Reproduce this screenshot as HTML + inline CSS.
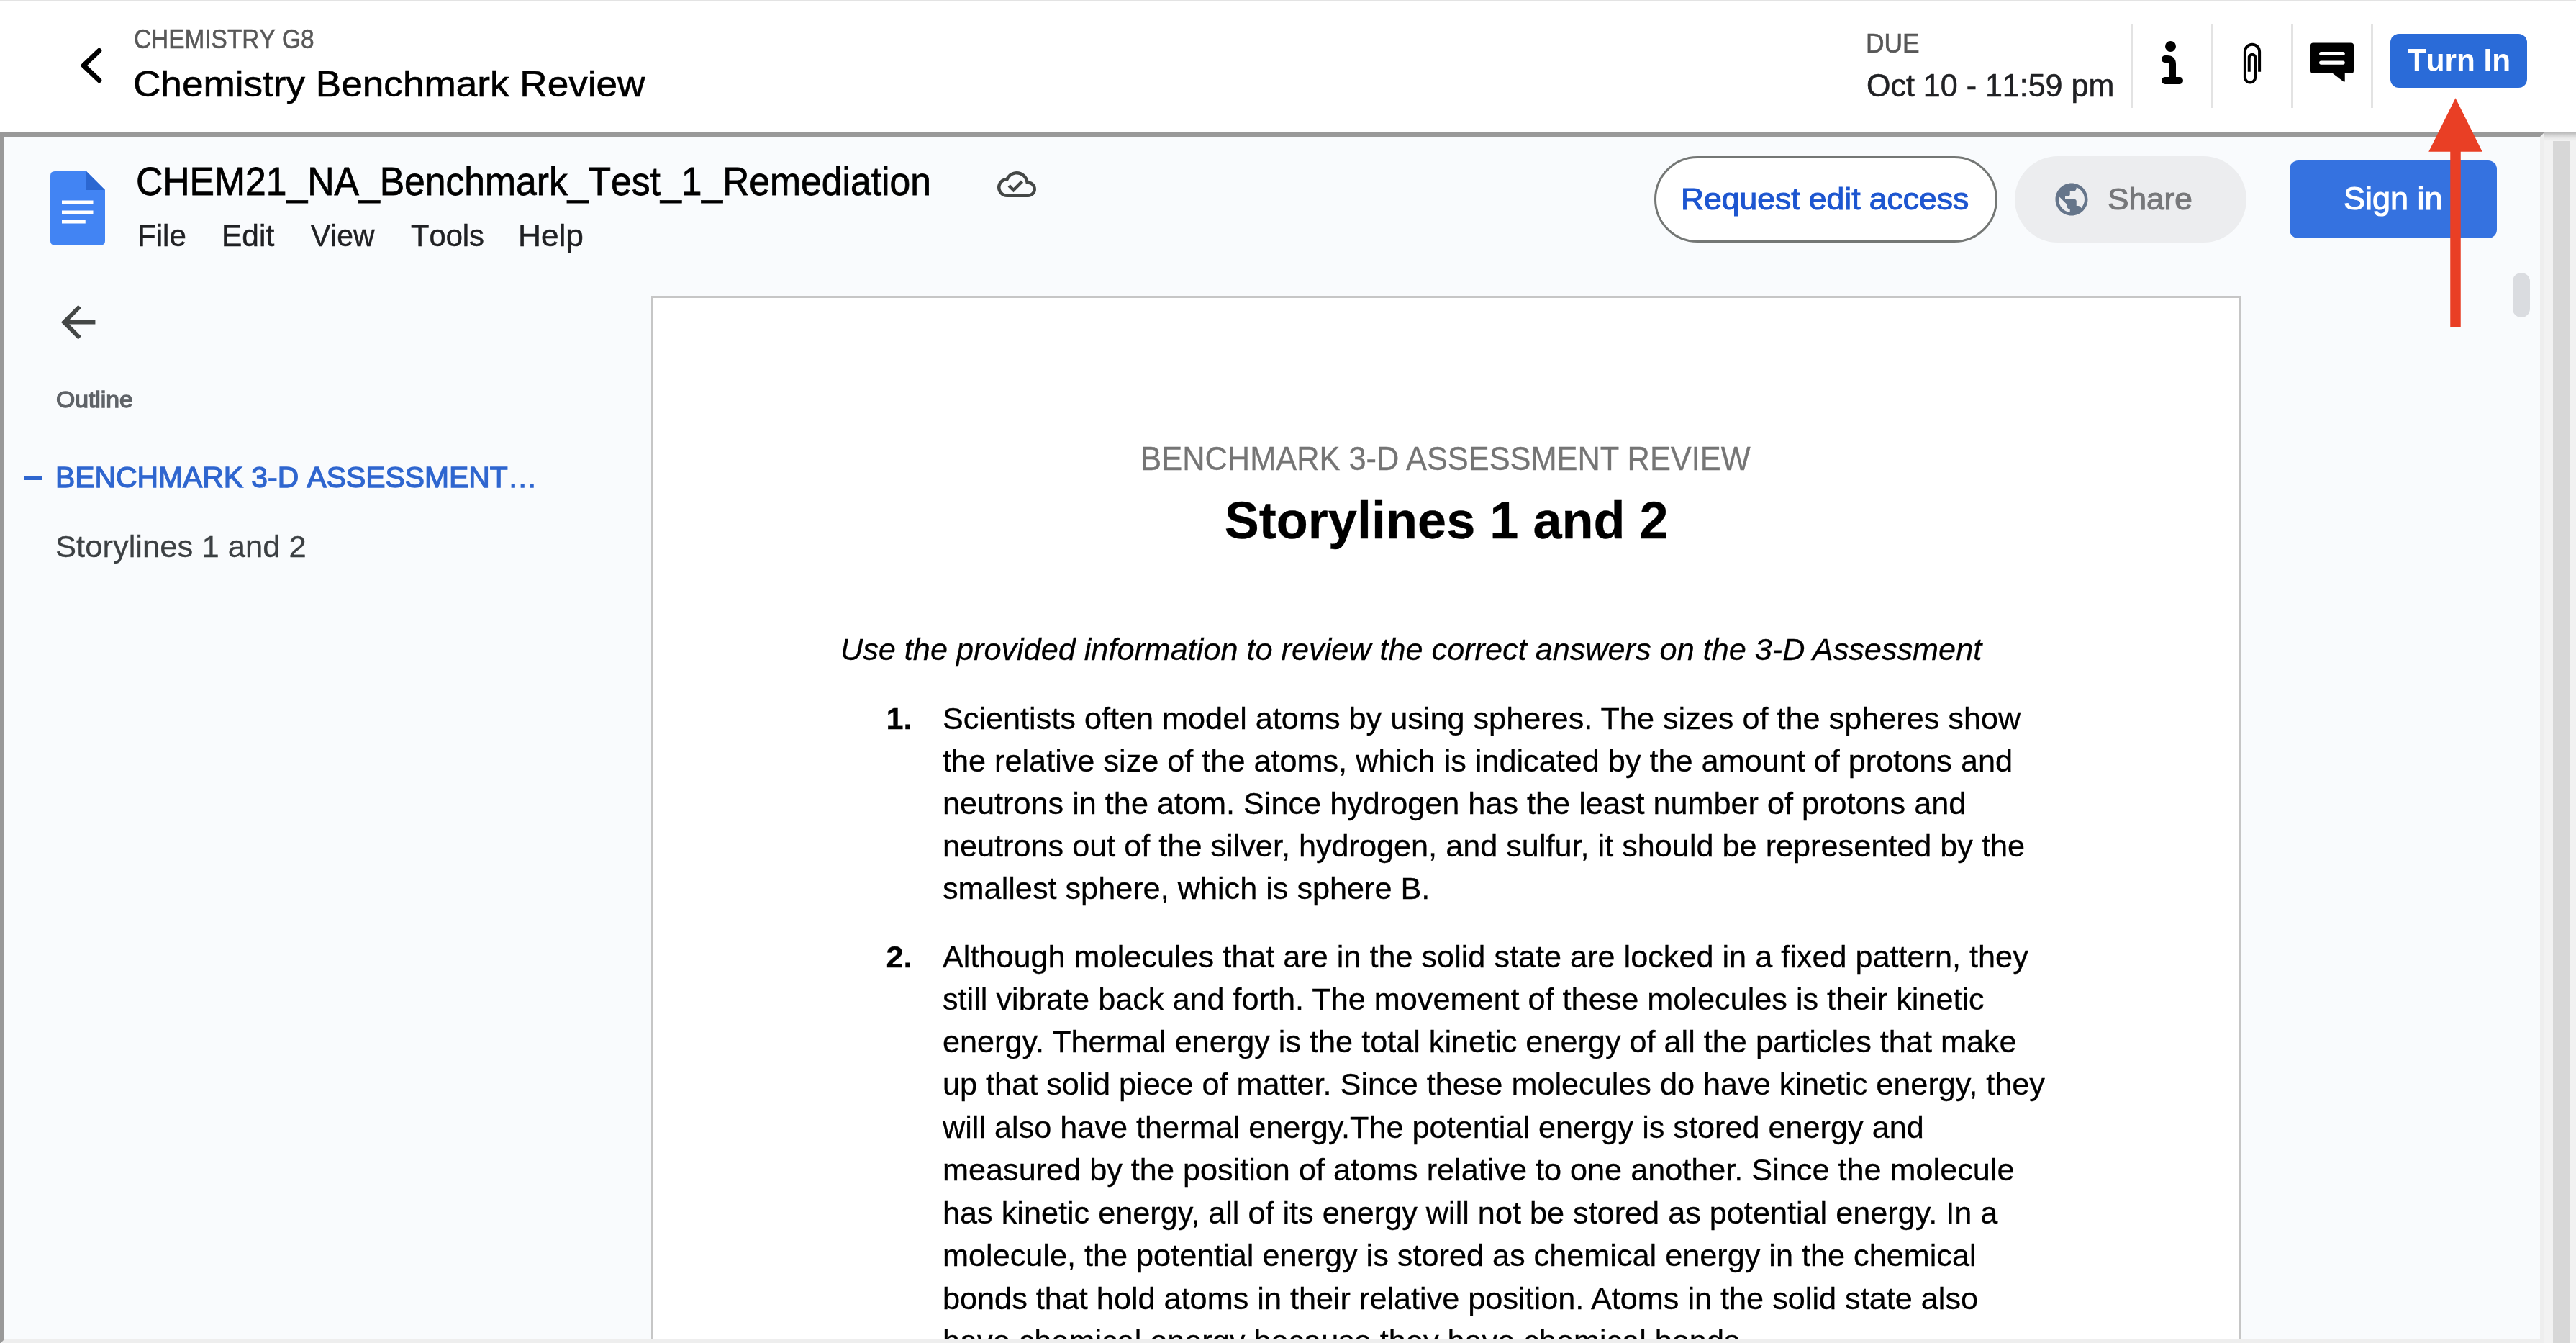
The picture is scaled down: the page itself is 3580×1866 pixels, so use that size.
<!DOCTYPE html>
<html><head><meta charset="utf-8"><title>Chemistry Benchmark Review</title>
<style>
html,body{margin:0;padding:0;background:#fff;}
body{width:3580px;height:1866px;position:relative;overflow:hidden;font-family:"Liberation Sans",sans-serif;font-kerning:normal;}
#w{position:absolute;left:0;top:0;width:3580px;height:1866px;will-change:transform;}
.r{position:absolute;}
.t{position:absolute;white-space:nowrap;transform-origin:0 0;font-kerning:none;}
.b{position:absolute;white-space:nowrap;line-height:59.2px;color:#000;-webkit-text-stroke:0.3px;}
</style></head><body>
<div id="w">
<div class="r" style="left:0px;top:0px;width:3580px;height:1px;background:#e3e3e3;"></div>
<svg class="r" style="left:100px;top:55px" width="60" height="72" viewBox="100 55 60 72"><path d="M137.75 70.5 L116.2 91 L137.75 111.5" fill="none" stroke="#000" stroke-width="7" stroke-linecap="round" stroke-linejoin="round"/></svg>
<div class="t" style="left:185.60px;top:36px;font-size:37.21px;line-height:37.21px;color:#585858;transform:scaleX(0.8977);-webkit-text-stroke:0.6px #585858;">CHEMISTRY G8</div>
<div class="t" style="left:185.10px;top:92px;font-size:50.00px;line-height:50.00px;color:#000;transform:scaleX(1.0625);-webkit-text-stroke:0.6px #000;">Chemistry Benchmark Review</div>
<div class="t" style="left:2593.40px;top:43px;font-size:36.92px;line-height:36.92px;color:#585858;transform:scaleX(0.9566);-webkit-text-stroke:0.6px #585858;">DUE</div>
<div class="t" style="left:2594.26px;top:98px;font-size:43.46px;line-height:43.46px;color:#202124;transform:scaleX(0.9897);-webkit-text-stroke:0.6px #202124;">Oct 10 - 11:59 pm</div>
<div class="r" style="left:2962px;top:33px;width:3px;height:116.5px;background:#e3e3e3;"></div>
<div class="r" style="left:3073px;top:33px;width:3px;height:116.5px;background:#e3e3e3;"></div>
<div class="r" style="left:3184px;top:33px;width:3px;height:116.5px;background:#e3e3e3;"></div>
<div class="r" style="left:3295px;top:33px;width:3px;height:116.5px;background:#e3e3e3;"></div>
<svg class="r" style="left:2990px;top:50px" width="60" height="80" viewBox="2990 50 60 80"><circle cx="3016.5" cy="64.4" r="7.5" fill="#000"/><path d="M3009 82.1 H3012 Q3019 82.1 3019 89 V112 M3009 112 H3029" fill="none" stroke="#000" stroke-width="10" stroke-linecap="round" stroke-linejoin="round"/></svg>
<svg class="r" style="left:3105px;top:50px" width="50" height="80" viewBox="3105 50 50 80"><path d="M3140.1 99.75 V71.85 A10.1 10.1 0 0 0 3119.9 71.85 V107.7 A7.18 7.18 0 0 0 3134.25 107.7 V80 A4.25 4.25 0 0 0 3125.75 80 V99.75" fill="none" stroke="#000" stroke-width="4"/></svg>
<svg class="r" style="left:3200px;top:50px" width="80" height="80" viewBox="3200 50 80 80"><rect x="3211" y="59.4" width="60" height="42.5" rx="3.5" fill="#000"/><path d="M3240.6 101 H3258.75 V112.5 Q3258.75 114.5 3257 113.5 Z" fill="#000"/><rect x="3223.1" y="71.9" width="35.65" height="5.2" rx="2.6" fill="#fff"/><rect x="3223.1" y="84.4" width="35.65" height="5.3" rx="2.6" fill="#fff"/></svg>
<div class="r" style="left:3321.75px;top:46.75px;width:189.75px;height:75.0px;background:#2a6bd8;border-radius:12px;"></div>
<div class="t" style="left:3345.53px;top:62px;font-size:44.33px;line-height:44.33px;color:#fff;transform:scaleX(0.9527);font-weight:700;">Turn In</div>
<div class="r" style="left:0;top:184px;width:3536px;height:1683px;box-sizing:border-box;border:6px solid;border-color:#999 #eee #eee #999;background:#f9fbfd;overflow:hidden"></div>
<div class="r" style="left:3536px;top:184px;width:44px;height:1682px;background:#f2f2f2;"></div>
<div class="r" style="left:3536px;top:184px;width:44px;height:12px;background:linear-gradient(#b9b9b9,#d6d6d6 35%,#eaeaea 70%,#f2f2f2);"></div>
<div class="r" style="left:3548px;top:196px;width:24px;height:1670px;background:#d7d7d7;"></div>
<svg class="r" style="left:70px;top:237.5px" width="76" height="102.5" viewBox="0 0 76 102.5"><path d="M6 0 H50 L76 26 V96.5 Q76 102.5 70 102.5 H6 Q0 102.5 0 96.5 V6 Q0 0 6 0 Z" fill="#4284f3"/><path d="M50 0 L76 26 H50 Z" fill="#2b67d1"/><rect x="16" y="40.5" width="43.5" height="5" fill="#fff"/><rect x="16" y="54.5" width="43.5" height="5" fill="#fff"/><rect x="16" y="67.5" width="32.75" height="5" fill="#fff"/></svg>
<div class="t" style="left:188.78px;top:226px;font-size:54.65px;line-height:54.65px;color:#000;transform:scaleX(0.9450);-webkit-text-stroke:0.8px #000;">CHEM21_NA_Benchmark_Test_1_Remediation</div>
<svg class="r" style="left:1386px;top:228.9px" width="54" height="54" viewBox="0 0 24 24"><path fill="#444746" d="M19.35 10.04C18.67 6.59 15.64 4 12 4 9.11 4 6.6 5.64 5.35 8.04 2.34 8.36 0 10.91 0 14c0 3.31 2.69 6 6 6h13c2.76 0 5-2.24 5-5 0-2.64-2.05-4.78-4.65-4.96zM19 18H6c-2.21 0-4-1.79-4-4 0-2.05 1.53-3.76 3.56-3.97l1.07-.11.5-.95C8.08 7.14 9.94 6 12 6c2.62 0 4.88 1.86 5.39 4.43l.3 1.5 1.53.11c1.56.1 2.78 1.41 2.78 2.96 0 1.65-1.35 3-3 3zm-9-3.82l-2.09-2.09L6.5 13.5 10 17l6.01-6.01-1.41-1.41z"/></svg>
<div class="t" style="left:191.30px;top:307px;font-size:42.15px;line-height:42.15px;color:#202124;transform:scaleX(0.9986);-webkit-text-stroke:0.5px #202124;">File</div>
<div class="t" style="left:307.76px;top:307px;font-size:42.15px;line-height:42.15px;color:#202124;transform:scaleX(1.0092);-webkit-text-stroke:0.5px #202124;">Edit</div>
<div class="t" style="left:432.07px;top:307px;font-size:42.15px;line-height:42.15px;color:#202124;transform:scaleX(0.9695);-webkit-text-stroke:0.5px #202124;">View</div>
<div class="t" style="left:571.31px;top:307px;font-size:42.15px;line-height:42.15px;color:#202124;transform:scaleX(0.9890);-webkit-text-stroke:0.5px #202124;">Tools</div>
<div class="t" style="left:720.12px;top:307px;font-size:42.15px;line-height:42.15px;color:#202124;transform:scaleX(1.0496);-webkit-text-stroke:0.5px #202124;">Help</div>
<div class="r" style="left:2299.25px;top:217px;width:476.25px;height:119.75px;box-sizing:border-box;border:3px solid #747775;border-radius:60px;background:#fff"></div>
<div class="t" style="left:2336.40px;top:256px;font-size:42.01px;line-height:42.01px;color:#1d56d0;transform:scaleX(1.0579);-webkit-text-stroke:1.1px #1d56d0;">Request edit access</div>
<div class="r" style="left:2799.5px;top:217px;width:322.25px;height:119.5px;background:#ecedef;border-radius:60px;"></div>
<svg class="r" style="left:2852px;top:250.25px" width="54" height="54" viewBox="0 0 24 24"><path fill="#65758a" d="M12 2C6.48 2 2 6.48 2 12s4.48 10 10 10 10-4.48 10-10S17.52 2 12 2zm-1 17.93c-3.95-.49-7-3.85-7-7.93 0-.62.08-1.21.21-1.79L9 15v1c0 1.1.9 2 2 2v1.93zm6.9-2.54c-.26-.81-1-1.39-1.9-1.39h-1v-3c0-.55-.45-1-1-1H8v-2h2c.55 0 1-.45 1-1V7h2c1.1 0 2-.9 2-2v-.41c2.93 1.19 5 4.06 5 7.41 0 2.08-.8 3.97-2.1 5.39z"/></svg>
<div class="t" style="left:2928.54px;top:256px;font-size:42.01px;line-height:42.01px;color:#77787a;transform:scaleX(1.0515);-webkit-text-stroke:1.1px #77787a;">Share</div>
<div class="r" style="left:3181.75px;top:223px;width:288.0px;height:107.5px;background:#3572e0;border-radius:12px;"></div>
<div class="t" style="left:3257.01px;top:254px;font-size:44.19px;line-height:44.19px;color:#fff;transform:scaleX(1.0186);-webkit-text-stroke:1.1px #fff;">Sign in</div>
<div class="r" style="left:3492px;top:378.6px;width:23.699999999999818px;height:62.299999999999955px;background:#dadce0;border-radius:12px;"></div>
<svg class="r" style="left:72.6px;top:412.1px" width="71.3" height="71.3" viewBox="0 0 24 24"><path fill="#444746" d="M20 11H7.83l5.59-5.59L12 4l-8 8 8 8 1.41-1.41L7.83 13H20v-2z"/></svg>
<div class="t" style="left:78.30px;top:541px;font-size:30.81px;line-height:30.81px;color:#5f6368;transform:scaleX(1.0938);-webkit-text-stroke:1.3px #5f6368;">Outline</div>
<div class="r" style="left:32.5px;top:661.75px;width:25.75px;height:5.25px;background:#2f66cf;"></div>
<div class="t" style="left:77.30px;top:643px;font-size:40.99px;line-height:40.99px;color:#2f66cf;transform:scaleX(0.9966);-webkit-text-stroke:1.3px #2f66cf;">BENCHMARK 3-D ASSESSMENT…</div>
<div class="t" style="left:77.42px;top:738px;font-size:43.17px;line-height:43.17px;color:#3c4043;transform:scaleX(1.0096);-webkit-text-stroke:0.3px #3c4043;">Storylines 1 and 2</div>
<div class="r" style="left:905px;top:411px;width:2210px;height:1450px;box-sizing:border-box;border:3px solid #c6c6c6;border-bottom:none;background:#fff"></div>
<div class="b" style="left:1585.36px;top:609px;font-size:43.37px;color:#757575;transform:scaleY(1.06);transform-origin:0 44px;">BENCHMARK 3-D ASSESSMENT REVIEW</div>
<div class="b" style="left:1701.66px;top:678px;font-size:72.1px;font-weight:700;line-height:90px;">Storylines 1 and 2</div>
<div class="b" style="left:1168.00px;top:873px;font-size:43.22px;font-style:italic;">Use the provided information to review the correct answers on the 3-D Assessment</div>
<div class="b" style="left:1231.50px;top:969px;font-size:43.22px;font-weight:700;">1.</div>
<div class="b" style="left:1310.00px;top:969px;font-size:43.22px;">Scientists often model atoms by using spheres. The sizes of the spheres show</div>
<div class="b" style="left:1310.00px;top:1028px;font-size:43.22px;">the relative size of the atoms, which is indicated by the amount of protons and</div>
<div class="b" style="left:1310.00px;top:1087px;font-size:43.22px;">neutrons in the atom. Since hydrogen has the least number of protons and</div>
<div class="b" style="left:1310.00px;top:1146px;font-size:43.22px;">neutrons out of the silver, hydrogen, and sulfur, it should be represented by the</div>
<div class="b" style="left:1310.00px;top:1205px;font-size:43.22px;">smallest sphere, which is sphere B.</div>
<div class="b" style="left:1231.50px;top:1300px;font-size:43.22px;font-weight:700;">2.</div>
<div class="b" style="left:1310.00px;top:1300px;font-size:43.22px;">Although molecules that are in the solid state are locked in a fixed pattern, they</div>
<div class="b" style="left:1310.00px;top:1359px;font-size:43.22px;">still vibrate back and forth. The movement of these molecules is their kinetic</div>
<div class="b" style="left:1310.00px;top:1418px;font-size:43.22px;">energy. Thermal energy is the total kinetic energy of all the particles that make</div>
<div class="b" style="left:1310.00px;top:1477px;font-size:43.22px;">up that solid piece of matter. Since these molecules do have kinetic energy, they</div>
<div class="b" style="left:1310.00px;top:1537px;font-size:43.22px;">will also have thermal energy.The potential energy is stored energy and</div>
<div class="b" style="left:1310.00px;top:1596px;font-size:43.22px;">measured by the position of atoms relative to one another. Since the molecule</div>
<div class="b" style="left:1310.00px;top:1656px;font-size:43.22px;">has kinetic energy, all of its energy will not be stored as potential energy. In a</div>
<div class="b" style="left:1310.00px;top:1715px;font-size:43.22px;">molecule, the potential energy is stored as chemical energy in the chemical</div>
<div class="b" style="left:1310.00px;top:1775px;font-size:43.22px;">bonds that hold atoms in their relative position. Atoms in the solid state also</div>
<div class="b" style="left:1310.00px;top:1834px;font-size:43.22px;">have chemical energy because they have chemical bonds.</div>
<div class="r" style="left:6px;top:1861px;width:3524px;height:5px;background:#eee;"></div>
<svg class="r" style="left:3360px;top:130px" width="110" height="330" viewBox="3360 130 110 330"><path d="M3412.5 136.25 L3449.75 210.75 H3419.75 V454 H3405.25 V210.75 H3375.25 Z" fill="#e93f25"/></svg>
</div>
</body></html>
